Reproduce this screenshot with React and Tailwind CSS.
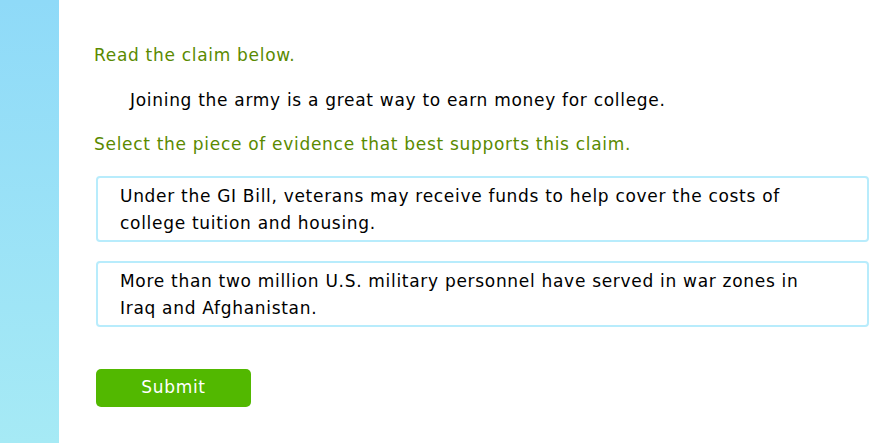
export default function App() {
  const options = [
    "Under the GI Bill, veterans may receive funds to help cover the costs of college tuition and housing.",
    "More than two million U.S. military personnel have served in war zones in Iraq and Afghanistan.",
  ];
  return (
    <div className="flex h-[443px] w-[895px] bg-white font-['DejaVu_Sans',Verdana,sans-serif] text-[17px] tracking-[0.7px]">
      <div className="w-[59px] shrink-0 bg-gradient-to-b from-[#8fdaf8] to-[#a6eaf5]" />
      <div className="flex-1 pl-[35px] pr-[26px] pt-[43px]">
        <p className="leading-[24px] text-[#5a8a00]">Read the claim below.</p>
        <p className="mt-[21px] pl-[36px] leading-[24px] text-black">
          Joining the army is a great way to earn money for college.
        </p>
        <p className="mt-[20px] leading-[24px] text-[#5a8a00]">
          Select the piece of evidence that best supports this claim.
        </p>
        <div className="ml-[2px] mt-[20px] flex flex-col gap-[19px]">
          {options.map((t) => (
            <div
              key={t}
              className="flex h-[66px] items-center rounded-[4px] border-2 border-[#b8ecfc] pl-[22px] pr-[40px] pt-[2px] leading-[27px] text-black"
            >
              {t}
            </div>
          ))}
        </div>
        <button className="ml-[2px] mt-[42px] h-[38px] w-[155px] rounded-[5px] bg-[#52b800] text-white">
          Submit
        </button>
      </div>
    </div>
  );
}
